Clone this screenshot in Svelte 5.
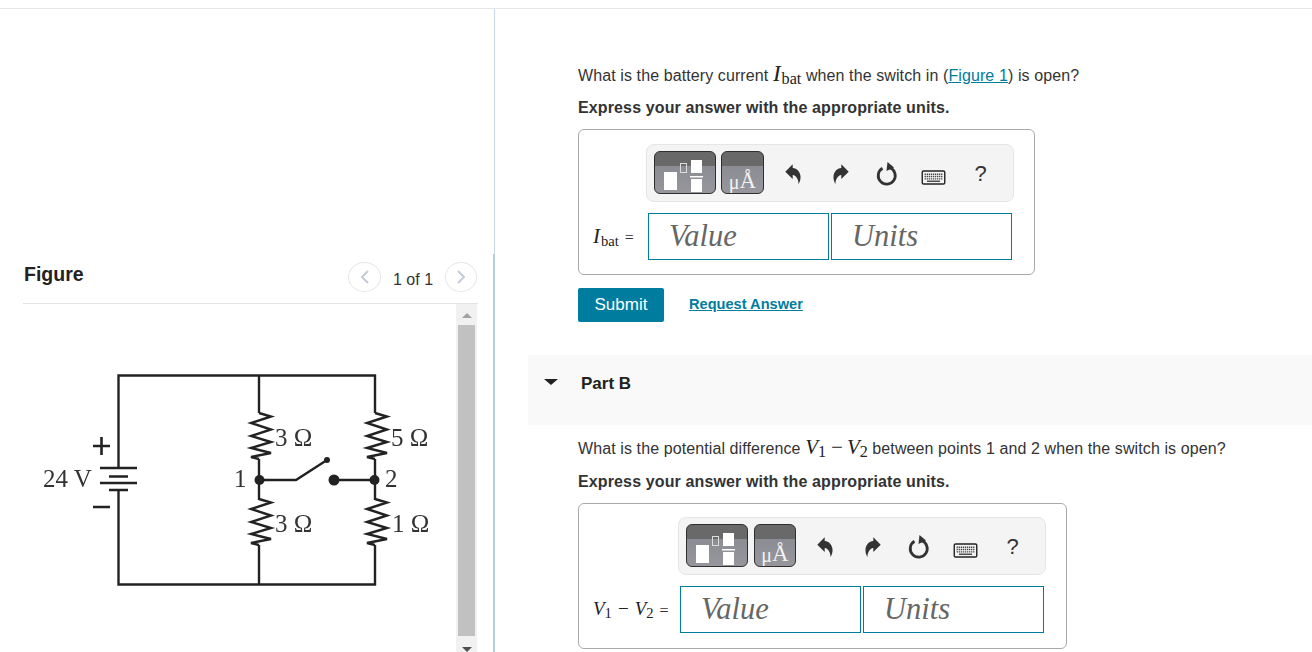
<script>
  const zigzag = (x, y) =>
    `M${x} ${y} L${x + 12} ${y + 3.500} L${x - 8} ${y + 10} L${x + 12} ${y + 16.500} L${x - 8} ${y + 23} L${x + 12} ${y + 29} L${x - 8} ${y + 35} L${x + 12} ${y + 40} L${x - 8} ${y + 44} L${x} ${y + 46}`;
</script>

{#snippet toolbar()}
  <div class="toolbar">
    <div class="tool wide">
      <svg width="60" height="41" viewBox="0 0 60 41">
        <rect x="9" y="20" width="13" height="18" fill="#fff" />
        <rect x="25.500" y="11.500" width="6" height="9" fill="none" stroke="#ddd" />
        <rect x="36" y="8" width="11" height="13" fill="#fff" />
        <rect x="35" y="24" width="13" height="1.500" fill="#fff" />
        <rect x="36" y="27" width="11" height="13" fill="#fff" />
      </svg>
    </div>
    <div class="tool narrow"><span class="mu">μ</span><span class="ang">Å</span></div>
    <div class="slot">
      <svg width="20" height="24" viewBox="0 0 20 24">
        <path d="M2.300 9.700 L9.700 2.300 V6 C14 6 17 10 17.500 14 C17.800 18 16.500 20 15.700 22.300 C15.500 18 13.500 13.300 9.700 13 V17 Z" fill="#333" />
      </svg>
    </div>
    <div class="slot shifted">
      <svg width="20" height="24" viewBox="0 0 20 24">
        <path d="M17.700 9.700 L10.300 2.300 V6 C6 6 3 10 2.500 14 C2.200 18 3.500 20 4.300 22.300 C4.500 18 6.500 13.300 10.300 13 V17 Z" fill="#333" />
      </svg>
    </div>
    <div class="slot">
      <svg width="24" height="26" viewBox="0 0 24 26">
        <path d="M15 6.800 A8.500 8.500 0 1 1 7.500 7.300" fill="none" stroke="#333" stroke-width="2.800" />
        <path d="M12.500 1 L19 6.500 L11.500 10 Z" fill="#333" />
      </svg>
    </div>
    <div class="slot keys">
      <svg width="25" height="15" viewBox="0 0 26 16">
        <rect x="1" y="1" width="24" height="14" rx="1.500" fill="#f4f4f4" stroke="#222" stroke-width="1.500" />
        <path d="M3.500 4.500 H22.500 M3.500 7 H22.500 M3.500 9.500 H22.500" stroke="#444" stroke-width="1.500" stroke-dasharray="1.400 0.800" />
        <path d="M6 12 H20" stroke="#444" stroke-width="1.500" />
      </svg>
    </div>
    <div class="slot help">?</div>
  </div>
{/snippet}

<div class="page">
  <div class="left">
    <div class="figure">
      <div class="fig-head">
        <span class="fig-title">Figure</span>
        <div class="pager">
          <span class="round">
            <svg width="10" height="16" viewBox="0 0 10 16"><path d="M8 2 L2 8 L8 14" fill="none" stroke="#c3ccd6" stroke-width="2" /></svg>
          </span>
          <span class="count">1 of 1</span>
          <span class="round">
            <svg width="10" height="16" viewBox="0 0 10 16"><path d="M2 2 L8 8 L2 14" fill="none" stroke="#c3ccd6" stroke-width="2" /></svg>
          </span>
        </div>
      </div>
      <div class="fig-body">
        <svg class="circuit" width="433" height="348" viewBox="23 304 433 348">
          <g fill="none" stroke="#222" stroke-width="2.400">
            <path d="M118.500 468 V375.500 H375 V413" />
            <path d="M118.500 490 V584.500 H375 V545" />
            <path d="M259 375.500 V413 M259 459 V500 M259 545 V584.500" />
            <path d="M375 459 V500" />
            <path d={zigzag(259, 413)} />
            <path d={zigzag(259, 499)} />
            <path d={zigzag(375, 413)} />
            <path d={zigzag(375, 499)} />
            <path d="M259 480 H296 L327 460" />
            <path d="M334 480 H375" />
            <path d="M100 468 H137 M100 483 H137 M109 476.500 H128 M109 490 H128" />
            <path d="M93 446 H110 M101.500 437 V455 M93 507 H110" stroke-width="2.600" />
          </g>
          <g fill="#222">
            <circle cx="259.500" cy="480" r="5" />
            <circle cx="374.500" cy="480" r="5" />
            <circle cx="334" cy="480" r="5.500" />
            <circle cx="327" cy="460" r="3" />
          </g>
          <g class="ckt-text">
            <text x="43" y="487">24 V</text>
            <text x="275" y="446">3 Ω</text>
            <text x="391" y="446">5 Ω</text>
            <text x="275" y="532">3 Ω</text>
            <text x="392" y="532">1 Ω</text>
            <text x="234" y="487">1</text>
            <text x="385" y="487">2</text>
          </g>
        </svg>
        <div class="scrollbar">
          <span class="arrow up"></span>
          <span class="thumb"></span>
          <span class="arrow down"></span>
        </div>
      </div>
    </div>
  </div>

  <div class="right">
    <div class="part">
      <p class="question">What is the battery current <span class="math big"><i class="cap">I</i><sub>bat</sub></span> when the switch in (<a href="#fig">Figure 1</a>) is open?</p>
      <p class="hint">Express your answer with the appropriate units.</p>
      <div class="box first">
        <div class="spacer"></div>
        {@render toolbar()}
        <div class="label"><span class="math"><i class="cap">I</i><sub>bat</sub></span><span class="eq">=</span></div>
        <div class="inputs">
          <div class="field">Value</div>
          <div class="field">Units</div>
        </div>
      </div>
      <div class="actions">
        <button class="submit">Submit</button>
        <a class="request" href="#answer">Request Answer</a>
      </div>
    </div>

    <div class="band">
      <span class="caret"></span>
      <span class="band-title">Part B</span>
    </div>

    <div class="part">
      <p class="question second">What is the potential difference <span class="math big"><i>V</i><sub>1</sub><span class="minus">−</span><i>V</i><sub>2</sub></span> between points 1 and 2 when the switch is open?</p>
      <p class="hint second">Express your answer with the appropriate units.</p>
      <div class="box last">
        <div class="spacer"></div>
        {@render toolbar()}
        <div class="label"><span class="math"><i>V</i><sub>1</sub><span class="minus">−</span><i>V</i><sub>2</sub></span><span class="eq">=</span></div>
        <div class="inputs">
          <div class="field">Value</div>
          <div class="field">Units</div>
        </div>
      </div>
    </div>
  </div>
</div>

<style>
  :global(body) {
    margin: 0;
    background: #fff;
    overflow: hidden;
  }

  .page {
    display: flex;
    height: 643px;
    margin-top: 8px;
    border-top: 1px solid #e6e6e6;
    overflow: hidden;
    font-family: "Liberation Sans", Arial, sans-serif;
    color: #333;
  }

  .left {
    box-sizing: border-box;
    flex: 0 0 495px;
    padding-top: 245px;
    border-right: 1px solid #c9d9e8;
  }

  .figure {
    box-sizing: border-box;
    height: 398px;
    border-right: 2px solid #b9cde0;
    margin-right: -1px;
    padding: 0 15px 0 23px;
  }

  .fig-head {
    box-sizing: border-box;
    height: 50px;
    display: flex;
    justify-content: space-between;
    border-bottom: 1px solid #e2e2e2;
  }

  .fig-title {
    margin: 9px 0 0 1px;
    font-size: 19.500px;
    line-height: 22px;
    font-weight: bold;
    color: #222;
  }

  .pager {
    display: flex;
    align-items: center;
    gap: 11px;
    height: 30px;
    margin: 8px 1px 0 0;
  }

  .round {
    box-sizing: border-box;
    width: 33px;
    height: 30px;
    display: flex;
    align-items: center;
    justify-content: center;
    border: 1px solid #e6e6e6;
    border-radius: 50%;
  }

  .round:last-child {
    width: 32px;
  }

  .count {
    font-size: 16px;
    width: 41px;
    margin: 5px 0 0 1px;
  }

  .fig-body {
    display: flex;
    height: 348px;
    overflow: hidden;
  }

  .circuit {
    flex: 0 0 433px;
    filter: blur(0.35px);
  }

  .ckt-text {
    font-family: "Liberation Serif", serif;
    font-size: 25px;
    fill: #333;
  }

  .scrollbar {
    flex: 0 0 21px;
    display: flex;
    flex-direction: column;
    align-items: center;
    background: #f1f1f1;
  }

  .arrow {
    width: 0;
    height: 0;
    border-left: 5px solid transparent;
    border-right: 5px solid transparent;
  }

  .arrow.up {
    margin-top: 9px;
    border-bottom: 5px solid #a3a3a3;
  }

  .arrow.down {
    margin-top: 11px;
    border-top: 5px solid #505050;
  }

  .thumb {
    width: 17px;
    height: 312px;
    margin-top: 7px;
    background: #c1c1c1;
  }

  .right {
    flex: 1;
    margin-left: 33px;
    min-width: 0;
  }

  .part {
    padding-left: 50px;
  }

  .question {
    height: 20px;
    margin: 57px 0 0;
    font-size: 16px;
    line-height: 20px;
    letter-spacing: 0.1px;
    white-space: nowrap;
  }

  .question.second {
    margin-top: 14px;
  }

  .question a {
    color: #007c9e;
  }

  .hint {
    margin: 12px 0 11px;
    font-size: 16px;
    line-height: 20px;
    font-weight: bold;
    letter-spacing: 0.13px;
  }

  .hint.second {
    margin-top: 13px;
  }

  .math {
    font-family: "Liberation Serif", serif;
    font-size: 19px;
    line-height: 0;
    color: #222;
    letter-spacing: 0;
  }

  .math.big {
    font-size: 21px;
  }

  .math .cap {
    font-size: 1.1em;
    padding-right: 1px;
  }

  .math sub {
    font-size: 0.77em;
    line-height: 0;
    vertical-align: -0.18em;
  }

  .minus {
    margin: 0 6px 0 6px;
  }

  .big .minus {
    margin: 0 4px 0 5px;
  }

  .box {
    box-sizing: border-box;
    display: grid;
    padding: 14px 0 14px 14px;
    border: 1px solid #aaa;
    border-radius: 6px;
  }

  .box.first {
    width: 457px;
    grid-template-columns: 55px auto;
  }

  .box.last {
    width: 489px;
    grid-template-columns: 87px auto;
    padding-top: 13px;
    padding-bottom: 15px;
  }

  .toolbar {
    box-sizing: border-box;
    width: 368px;
    height: 58px;
    margin-left: -2px;
    padding: 6px 0 0 7px;
    display: flex;
    gap: 5px;
    background: #f4f4f4;
    border: 1px solid #e5e5e5;
    border-radius: 8px;
  }

  .tool {
    box-sizing: border-box;
    height: 43px;
    display: flex;
    align-items: flex-end;
    justify-content: center;
    border: 1px solid #2f2f2f;
    border-radius: 6px;
    background: linear-gradient(#696969 0, #696969 14px, #8c8c94 14px, #96969c 100%);
    color: #f2f2f2;
    font-family: "Liberation Serif", serif;
    overflow: hidden;
  }

  .tool.wide {
    width: 62px;
  }

  .tool.narrow {
    width: 43px;
    line-height: 1;
    padding-bottom: 1px;
  }

  .last .tool.narrow {
    width: 42px;
    margin-left: 1px;
  }

  .mu {
    font-size: 20px;
  }

  .ang {
    font-size: 23px;
  }

  .slot {
    box-sizing: border-box;
    flex: 0 0 47px;
    margin-right: -5px;
    height: 42px;
    padding-top: 4px;
    display: flex;
    align-items: center;
    justify-content: center;
  }

  .slot.shifted {
    padding-left: 2px;
  }

  .slot.keys {
    padding-top: 10px;
  }

  .help {
    font-size: 22px;
    color: #333;
  }

  .label {
    box-sizing: border-box;
    margin-top: 11px;
    height: 47px;
    padding-top: 3px;
    display: flex;
    align-items: center;
    gap: 6px;
    white-space: nowrap;
  }

  .eq {
    font-family: "Liberation Serif", serif;
    font-size: 16px;
  }

  .inputs {
    margin-top: 11px;
    display: flex;
    gap: 2px;
  }

  .field {
    box-sizing: border-box;
    width: 181px;
    height: 47px;
    padding-left: 20px;
    border: 1px solid #007c9e;
    font-family: "Liberation Serif", serif;
    font-style: italic;
    font-size: 30.500px;
    line-height: 45px;
    color: #666;
  }

  .actions {
    display: flex;
    align-items: center;
    gap: 25px;
    margin-top: 13px;
  }

  .submit {
    width: 86px;
    height: 34px;
    padding: 0;
    border: 0;
    border-radius: 2px;
    background: #007c9e;
    color: #fff;
    font-family: inherit;
    font-size: 17px;
  }

  .request {
    margin-bottom: 2px;
    color: #007c9e;
    font-size: 14.600px;
    font-weight: bold;
  }

  .band {
    box-sizing: border-box;
    height: 70px;
    margin-top: 33px;
    padding: 19px 0 0 16px;
    display: flex;
    align-items: flex-start;
    background: #f9f9f9;
  }

  .caret {
    width: 0;
    height: 0;
    margin-top: 5px;
    border-left: 7px solid transparent;
    border-right: 7px solid transparent;
    border-top: 6px solid #222;
  }

  .band-title {
    margin-left: 23px;
    font-size: 17px;
    line-height: 20px;
    font-weight: bold;
    color: #222;
  }
</style>
